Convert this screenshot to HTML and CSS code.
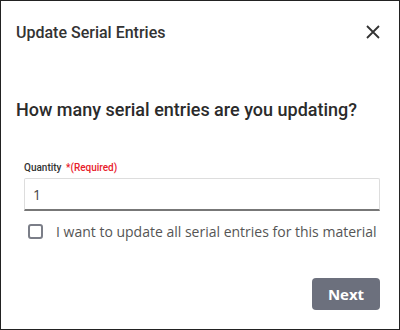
FILE: index.html
```html
<!DOCTYPE html>
<html>
<head>
<meta charset="utf-8">
<link rel="stylesheet" href="styles.css">
</head>
<body>
<div class="dialog">
  <div class="header">
    <div class="title">Update Serial Entries</div>
    <button class="close" aria-label="Close">
      <svg width="14" height="14" viewBox="0 0 14 14"><path d="M1 1L13 13M13 1L1 13" stroke="#333" stroke-width="1.8" fill="none"/></svg>
    </button>
  </div>
  <div class="question">How many serial entries are you updating?</div>
  <div class="form">
    <div class="label">Quantity <span class="req">*(Required)</span></div>
    <div class="input">1</div>
    <label class="check"><span class="box"></span><span class="check-text">I want to update all serial entries for this material</span></label>
  </div>
  <div class="footer">
    <button class="next">Next</button>
  </div>
</div>
</body>
</html>
```
FILE: styles.css
```css
html, body { margin: 0; padding: 0; background: #fff; }
.dialog {
  box-sizing: border-box;
  width: 400px;
  height: 330px;
  border: 1px solid #222;
  font-family: Roboto, "Liberation Sans", sans-serif;
  color: #2b2b2b;
  display: flex;
  flex-direction: column;
}
.header {
  display: flex;
  align-items: center;
  justify-content: space-between;
  padding: 0 19px 0 15px;
  height: 62px;
}
.title { font-size: 16px; font-weight: 500; color: #333; }
.close { border: 0; background: none; padding: 0; width: 14px; height: 14px; display: flex; }
.question {
  margin-top: 36px;
  padding-left: 15px;
  font-size: 18px;
  font-weight: 500;
  color: #2b2b2b;
}
.form { padding: 0 19px 0 23px; margin-top: 41px; }
.label { font-size: 10px; font-weight: 500; color: #333; height: 14px; line-height: 14px; }
.req { color: #e8202b; font-weight: 500; margin-left: 2px; }
.input {
  margin-top: 3px;
  height: 33px;
  box-sizing: border-box;
  border: 1px solid #ddd;
  border-bottom: 2px solid #777;
  border-radius: 2px 2px 0 0;
  font-family: "Open Sans", sans-serif;
  font-size: 14px;
  color: #444;
  padding-left: 8px;
  display: flex;
  align-items: center;
}
.check { display: flex; align-items: center; margin-top: 11px; padding-left: 4px; }
.box {
  width: 11px; height: 11px;
  border: 2px solid #7b7e88;
  border-radius: 3px;
}
.check-text {
  margin-left: 13px;
  font-family: "Open Sans", sans-serif;
  font-size: 14px;
  color: #555;
}
.footer { display: flex; justify-content: flex-end; padding: 0 19px 0 0; margin-top: 37px; }
.next {
  width: 68px; height: 32px;
  border: 0;
  border-radius: 4px;
  background: #6c707d;
  color: #fff;
  font-family: "Open Sans", sans-serif;
  font-weight: 700;
  font-size: 15px;
}
```
